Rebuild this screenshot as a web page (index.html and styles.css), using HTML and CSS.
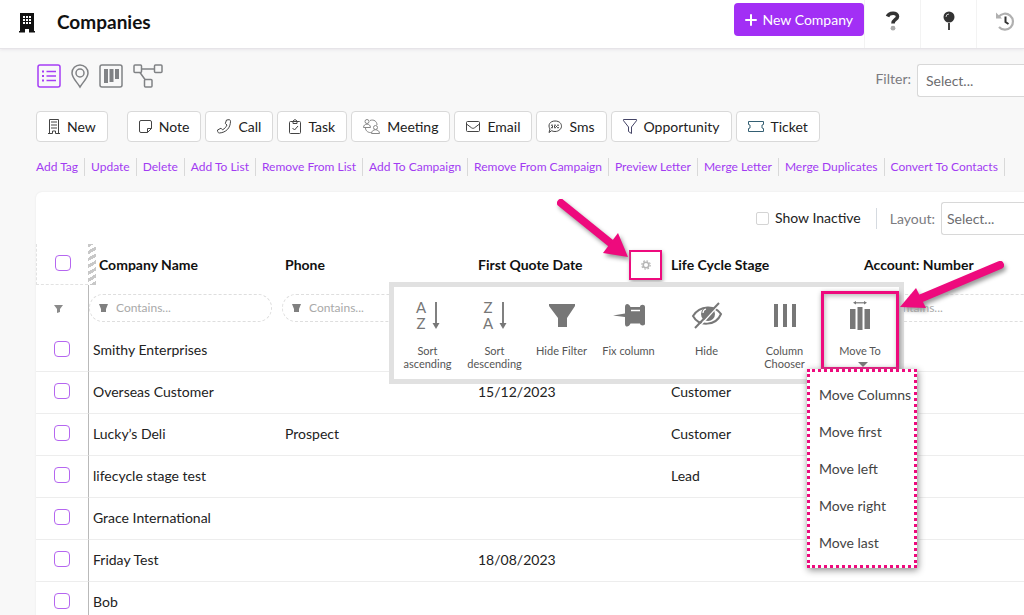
FILE: index.html
```html
<!DOCTYPE html>
<html lang="en">
<head>
<meta charset="utf-8">
<title>Companies</title>
<link rel="stylesheet" href="styles.css">
</head>
<body>
<header class="topbar">
  <svg class="topbar-logo" width="16" height="20" viewBox="0 0 16 20"><path fill="#111" fill-rule="evenodd" d="M1 1h14v18h-5v-3H6v3H1zM4 3v2h2V3zm3 0v2h2V3zm3 0v2h2V3zM4 6v2h2V6zm3 0v2h2V6zm3 0v2h2V6zM4 9v2h2V9zm3 0v2h2V9zm3 0v2h2V9z"/><path fill="#111" d="M1 0h14v1.500H1zM0 18h6v1.500H0zM10 18h6v1.500h-6z"/></svg>
  <h1 class="title">Companies</h1>
  <button class="primary" type="button"><svg width="12" height="12" viewBox="0 0 12 12"><path d="M6 1v10M1 6h10" stroke="#fff" stroke-width="2" stroke-linecap="round"/></svg>New Company</button>
  <nav class="tools">
    <button class="tool" type="button" aria-label="Help"><svg width="16" height="20" viewBox="0 0 16 20"><path d="M2.500 5.500C4 1.500 12.500 1 12.500 5.500c0 3-4.500 3-4.500 7" fill="none" stroke="#333" stroke-width="3.600"/><circle cx="8" cy="17.200" r="2.400" fill="#aaa"/></svg></button>
    <button class="tool" type="button" aria-label="Pin"><svg width="12" height="20" viewBox="0 0 12 20"><circle cx="6" cy="6" r="5.500" fill="#333"/><path d="M3 6a3 3 0 0 1 3-3" fill="none" stroke="#ccc"/><path d="M6 12v7" stroke="#444" stroke-width="2"/></svg></button>
    <button class="tool tool-last" type="button" aria-label="History"><svg width="20" height="20" viewBox="0 0 20 20"><path d="M3.500 6A8 8 0 1 1 4 16" fill="none" stroke="#b0b0b0" stroke-width="2.200"/><path d="M1 1.500v6h6" fill="#b0b0b0"/><path d="M10.500 5.500V11l3 2" fill="none" stroke="#333" stroke-width="2"/></svg></button>
  </nav>
</header>

<main class="page">
  <div class="viewbar">
    <button class="view" type="button" aria-label="List view"><svg width="24" height="24" viewBox="0 0 24 24" fill="none" stroke="#a53df5" stroke-width="1.500"><rect x="1" y="1" width="22" height="22" rx="2"/><path d="M9.500 7.500H19M9.500 12H19M9.500 16.500H19"/><path d="M5 7.500h2M5 12h2M5 16.500h2" stroke-width="2"/></svg></button>
    <button class="view" type="button" aria-label="Map view"><svg width="18" height="24" viewBox="0 0 18 24" fill="none" stroke="#808285" stroke-width="1.500"><path d="M9 23C6 18 1 14 1 9a8 8 0 0 1 16 0c0 5-5 9-8 14z"/><circle cx="9" cy="9" r="4"/></svg></button>
    <button class="view" type="button" aria-label="Board view"><svg width="24" height="24" viewBox="0 0 24 24"><rect x="1" y="1" width="22" height="22" rx="2" fill="none" stroke="#808285" stroke-width="1.500"/><path d="M5 5h4v14H5zM10.500 5h4v13h-4zM16 5h4v10h-4z" fill="#808285"/></svg></button>
    <button class="view" type="button" aria-label="Workflow view"><svg width="30" height="24" viewBox="0 0 30 24" fill="none" stroke="#808285" stroke-width="1.500"><rect x="1" y="1" width="7.500" height="7.500" rx="1"/><rect x="21.500" y="1" width="7.500" height="7.500" rx="1"/><rect x="11.500" y="15.500" width="7.500" height="7.500" rx="1"/><path d="M8.500 5h13M7 8.500l5 7"/></svg></button>
    <label class="select-label" for="filter">Filter:</label>
    <select class="select" id="filter"><option>Select...</option></select>
  </div>

  <div class="actions">
    <button class="action action-new" type="button"><svg width="12" height="15" viewBox="0 0 12 15" fill="none" stroke="#444"><path d="M1.500 14V.5h9V14M0 14.500h4.500V12h3v2.500H12"/><path d="M3.500 3h1M5.500 3h1M7.500 3h1M3.500 6h1M5.500 6h1M7.500 6h1M3.500 9h1M5.500 9h1M7.500 9h1" stroke-width="2"/></svg>New</button>
    <button class="action" type="button"><svg width="13" height="15" viewBox="0 0 13 15" fill="none" stroke="#444"><path d="M8.500 13.500H2a1.500 1.500 0 0 1-1.500-1.500V3A1.500 1.500 0 0 1 2 1.500h9A1.500 1.500 0 0 1 12.500 3v6.500zM8.500 13.500v-4h4"/></svg>Note</button>
    <button class="action" type="button"><svg width="14" height="15" viewBox="0 0 14 15" fill="none" stroke="#444"><path d="M9.500 1l2.500-.3c1 0 1.500.7 1.500 1.500C13.500 9 9 13.500 2.500 14c-1 0-1.500-.5-1.800-1.500L.5 11l3.500-1.800 1.500 1.600C8 9.500 9 8 10 6L8.300 4.500z"/></svg>Call</button>
    <button class="action" type="button"><svg width="12" height="15" viewBox="0 0 12 15" fill="none" stroke="#444"><rect x=".5" y="2.500" width="11" height="12" rx="1"/><path d="M4 4.500V2l2-1.500L8 2v2.500zM3.500 9l2 2 3.500-4"/></svg>Task</button>
    <button class="action" type="button"><svg width="17" height="15" viewBox="0 0 17 15" fill="none" stroke="#888"><circle cx="4" cy="2.500" r="2"/><path d="M.5 8.500C.5 4 7.500 4 7.500 8.500zM7 1.500c4-1.500 7 1 7 4.500M2.500 9c0 3 3 5 6 4.500"/><circle cx="12.500" cy="8.500" r="2"/><path d="M8.500 14.500c0-5 8-5 8 0z"/></svg>Meeting</button>
    <button class="action" type="button"><svg width="14" height="15" viewBox="0 0 14 15" fill="none" stroke="#444"><rect x=".5" y="2.500" width="13" height="10" rx="1"/><path d="M.5 5l5 3.800c1 .7 2 .7 3 0l5-3.800"/></svg>Email</button>
    <button class="action" type="button"><svg width="14" height="15" viewBox="0 0 14 15" fill="none" stroke="#444"><path d="M1 13.500l1-3.500C-.5 6 2 2 7 2s6.500 3 6.500 5.300S11 12.500 7 12.500c-1.500 0-2.500-.3-3.300-.8z"/><path d="M3 6.200h8M3 8.700h8" stroke-dasharray="2 1"/><path d="M4 7.500h6" stroke-dasharray="1 1"/></svg>Sms</button>
    <button class="action" type="button"><svg width="14" height="15" viewBox="0 0 14 15" fill="none" stroke="#446"><path d="M.5.500h13v1.200L8.500 8v6.500l-3-2V8l-5-6.300z"/></svg>Opportunity</button>
    <button class="action" type="button"><svg width="16" height="15" viewBox="0 0 16 15" fill="none" stroke="#345f73"><path d="M.5 2.500h15v3l-1.500.5v3l1.500.5v3H.5v-3L2 9V6l-1.500-.5z"/></svg>Ticket</button>
  </div>

  <nav class="links">
    <a href="#">Add Tag</a><a href="#">Update</a><a href="#">Delete</a><a href="#">Add To List</a><a href="#">Remove From List</a><a href="#">Add To Campaign</a><a href="#">Remove From Campaign</a><a href="#">Preview Letter</a><a href="#">Merge Letter</a><a href="#">Merge Duplicates</a><a href="#">Convert To Contacts</a>
  </nav>

  <section class="card">
    <div class="card-bar">
      <label class="inactive"><input class="inactive-box" type="checkbox">Show Inactive</label>
      <label class="select-label" for="layout">Layout:</label>
      <select class="select select-layout" id="layout"><option>Select...</option></select>
    </div>

    <div class="grid-scroll">
    <table class="grid">
      <colgroup><col class="col-check"><col class="col"><col class="col"><col class="col"><col class="col"><col class="col"></colgroup>
      <thead>
        <tr class="head">
          <th class="check-cell"><input class="check" type="checkbox" aria-label="Select all"></th>
          <th class="name-head">Company Name</th><th>Phone</th>
          <th><div class="head-cell">First Quote Date<button class="gear" type="button" aria-label="Column options"><svg width="10" height="10" viewBox="0 0 10 10" fill="none" stroke="#b5b5b5"><circle cx="5" cy="5" r="2.800" stroke-width="1.600"/><circle cx="5" cy="5" r="4.200" stroke-width="1.200" stroke-dasharray="1.650 1.650"/></svg></button></div></th>
          <th>Life Cycle Stage</th><th>Account: Number</th>
        </tr>
        <tr class="filters">
          <td class="filter-cell"><svg width="9" height="8" viewBox="0 0 9 8"><path d="M0 0h9L6 4v3L3 8V4z" fill="#8a8a8a"/></svg></td>
          <td><label class="pill"><svg width="9" height="8" viewBox="0 0 9 8"><path d="M0 0h9L7 5v3H2V5z" fill="#808080"/></svg><input type="text" placeholder="Contains..." aria-label="Company name filter"></label></td>
          <td><label class="pill"><svg width="9" height="8" viewBox="0 0 9 8"><path d="M0 0h9L7 5v3H2V5z" fill="#808080"/></svg><input type="text" placeholder="Contains..." aria-label="Phone filter"></label></td>
          <td></td><td></td>
          <td><label class="pill"><svg width="9" height="8" viewBox="0 0 9 8"><path d="M0 0h9L7 5v3H2V5z" fill="#808080"/></svg><input type="text" placeholder="Contains..." aria-label="Account filter"></label></td>
        </tr>
      </thead>
      <tbody>
        <tr><td class="check-cell"><input class="check" type="checkbox" aria-label="Select row"></td><td>Smithy Enterprises</td><td></td><td></td><td></td><td></td></tr>
        <tr><td class="check-cell"><input class="check" type="checkbox" aria-label="Select row"></td><td>Overseas Customer</td><td></td><td>15/12/2023</td><td>Customer</td><td></td></tr>
        <tr><td class="check-cell"><input class="check" type="checkbox" aria-label="Select row"></td><td>Lucky’s Deli</td><td>Prospect</td><td></td><td>Customer</td><td></td></tr>
        <tr><td class="check-cell"><input class="check" type="checkbox" aria-label="Select row"></td><td>lifecycle stage test</td><td></td><td></td><td>Lead</td><td></td></tr>
        <tr><td class="check-cell"><input class="check" type="checkbox" aria-label="Select row"></td><td>Grace International</td><td></td><td></td><td></td><td></td></tr>
        <tr><td class="check-cell"><input class="check" type="checkbox" aria-label="Select row"></td><td>Friday Test</td><td></td><td>18/08/2023</td><td></td><td></td></tr>
        <tr><td class="check-cell"><input class="check" type="checkbox" aria-label="Select row"></td><td>Bob</td><td></td><td></td><td></td><td></td></tr>
      </tbody>
    </table>
    </div>

    <div class="popup">
      <button class="option" type="button"><svg width="34" height="28" viewBox="0 0 34 28"><text class="letter" x="10" y="11">A</text><text class="letter" x="10" y="27">Z</text><path d="M25 0v24" stroke="#808080" stroke-width="2"/><path d="M21.500 21h7L25 27z" fill="#777"/></svg>Sort ascending</button>
      <button class="option" type="button"><svg width="34" height="28" viewBox="0 0 34 28"><text class="letter" x="10" y="11">Z</text><text class="letter" x="10" y="27">A</text><path d="M25 0v24" stroke="#808080" stroke-width="2"/><path d="M21.500 21h7L25 27z" fill="#777"/></svg>Sort descending</button>
      <button class="option" type="button"><svg width="34" height="28" viewBox="0 0 34 28"><path d="M4 2h26v2l-8 12v9h-9v-9L4 4z" fill="#777"/></svg>Hide Filter</button>
      <button class="option" type="button"><svg width="34" height="28" viewBox="0 0 34 28"><path d="M1 13.500L13 11.500V5c0-4 4-4 5.500 0H28c0-3 5-3 5 0v17c0 2-5 2-5-.5h-9.500c-1.500 4-5.500 4-5.500.5v-7z" fill="#777"/><path d="M19 8.500h9" stroke="#fff" stroke-width="1.500"/></svg>Fix column</button>
      <span class="rule"></span>
      <button class="option" type="button"><svg width="34" height="28" viewBox="0 0 34 28" fill="none" stroke="#777" stroke-width="2"><path d="M3 14C10 3 25 3 31 12c-5 12-22 13-28 2z"/><circle cx="18" cy="12" r="7" fill="#777" stroke="none"/><path d="M13 11c0-2 1-3.500 3-4" stroke="#fff" stroke-width="1.200"/><path d="M8 26L28 4" stroke="#fff" stroke-width="1.500"/><path d="M5 26L29 1"/></svg>Hide</button>
      <span class="rule"></span>
      <button class="option" type="button"><svg width="34" height="28" viewBox="0 0 34 28"><path d="M6 2h4v23H6zM15 2h4v23h-4zM24 2h4v23h-4z" fill="#777"/></svg>Column Chooser</button>
      <button class="option option-move" type="button"><svg width="34" height="28" viewBox="0 0 34 28"><path d="M7 7h5.500v20H7zM14.500 5h5v23h-5zM21.500 7H27v20h-5.500z" fill="#777"/><path d="M12 .8h10" stroke="#777" stroke-width="1.200"/><path d="M13-1v3.600L10 .8zM21-1v3.600l3-1.800z" fill="#777"/></svg>Move To<svg class="caret" width="10" height="5" viewBox="0 0 10 5"><path d="M0 0h10L5 5z" fill="#777"/></svg></button>
    </div>
    <div class="menu">
      <button type="button">Move Columns</button><button type="button">Move first</button><button type="button">Move left</button><button type="button">Move right</button><button type="button">Move last</button>
    </div>
    <svg class="arrow arrow-gear" width="80" height="70" viewBox="0 0 80 70"><path d="M6 6L58 48" stroke="#ee0a7d" stroke-width="8" stroke-linecap="round"/><path d="M63 36L73 60 48 56z" fill="#ee0a7d"/></svg>
    <svg class="arrow arrow-move" width="110" height="60" viewBox="0 0 110 60"><path d="M105 9L22 44" stroke="#ee0a7d" stroke-width="8" stroke-linecap="round"/><path d="M5 51L21 32 31 52z" fill="#ee0a7d"/></svg>
  </section>
</main>
</body>
</html>
```
FILE: styles.css
```css
* { box-sizing: border-box; }

body {
  margin: 0;
  height: 100vh;
  overflow: hidden;
  background: #f8f8f8;
  color: #222;
  font: 14px/20px Lato, "Open Sans", sans-serif;
}

button, input, select { font: inherit; color: inherit; }
button { margin: 0; padding: 0; border: 0; background: none; }
svg { flex: none; overflow: visible; }

.topbar {
  display: flex;
  align-items: flex-start;
  height: 49px;
  padding-left: 19px;
  background: #fff;
  border-bottom: 1px solid #e6e4e8;
  box-shadow: 0 1px 3px #e8e6ea;
}
.topbar-logo { margin-top: 13px; }
.title {
  flex: 1;
  margin: 10px 0 0 22px;
  font-size: 19px;
  line-height: 24px;
  font-weight: 700;
  color: #111;
}
.primary {
  display: flex;
  align-items: center;
  gap: 6px;
  height: 33px;
  margin-top: 3px;
  padding: 0 11px;
  border-radius: 4px;
  background: #a22ff5;
  color: #fff;
}
.tools { display: flex; height: 48px; }
.tool {
  display: flex;
  justify-content: center;
  width: 56px;
  padding-top: 11px;
  border-left: 1px solid #f3f3f3;
}
.tool-last { justify-content: flex-start; width: 48px; padding-left: 18px; }

.page { padding: 15px 0 0 36px; }

.viewbar { display: flex; align-items: flex-start; gap: 10px; height: 33px; padding-left: 1px; }
.view { display: flex; }
.select-label { margin-left: auto; line-height: 30px; color: #7b7b80; }
.select {
  width: 107px;
  height: 33px;
  margin-left: -4px;
  padding: 1px 8px 0;
  appearance: none;
  border: 1px solid #d8d8d8;
  border-right: 0;
  border-radius: 3px 0 0 3px;
  background: #fff;
  color: #6c6c70;
}

.actions { display: flex; gap: 4px; margin-top: 14px; }
.action {
  display: flex;
  align-items: center;
  gap: 7px;
  height: 31px;
  padding: 0 11px;
  border: 1px solid #d9d9d9;
  border-radius: 4px;
  background: #fff;
}
.action-new { margin-right: 15px; }

.links { display: flex; margin-top: 16px; }
.links a {
  margin-right: 6px;
  padding-right: 6px;
  border-right: 1px solid #d9d9d9;
  font-size: 12px;
  line-height: 18px;
  color: #a23bf2;
  text-decoration: none;
  white-space: nowrap;
}

.card {
  position: relative;
  margin-top: 16px;
  background: #fff;
  border-top-left-radius: 6px;
  box-shadow: 0 0 2px #e4e4e4;
}
.card-bar {
  display: flex;
  align-items: center;
  justify-content: flex-end;
  height: 52px;
}
.card-bar .select-label {
  margin: 0;
  padding-left: 13px;
  border-left: 1px solid #d5dae0;
  line-height: 21px;
}
.select-layout { width: 83px; margin-left: 6px; padding: 2px 5px 0; }
.inactive { display: flex; align-items: center; gap: 6px; margin-right: 15px; }
.inactive-box {
  width: 13px;
  height: 13px;
  margin: 0;
  appearance: none;
  border: 1px solid #d4d4d4;
  border-radius: 2px;
}

.grid-scroll { overflow: hidden; }
.grid {
  width: 1017px;
  table-layout: fixed;
  border-collapse: separate;
  border-spacing: 0;
}
.col-check { width: 52px; }
.col { width: 193px; }
.grid th, .grid td { padding: 0 0 0 4px; text-align: left; }
.grid th { height: 41px; font-weight: 700; color: #111; }
.grid .check-cell, .grid .filter-cell { padding: 0; text-align: center; }
.grid th.check-cell { border: 1px dashed #e2e2e2; border-width: 0 0 1px 1px; }
.grid th.name-head {
  padding-left: 11px;
  background: repeating-linear-gradient(150deg, #c8c8c8 0 3px, #fff 3px 6px) left / 8px 100% no-repeat;
}
.check {
  display: block;
  width: 16px;
  height: 16px;
  margin: 0 auto 3px;
  appearance: none;
  border: 1px solid #b566f0;
  border-radius: 4px;
  background: #fff;
}
.head-cell { display: flex; align-items: center; justify-content: space-between; }
.gear {
  display: flex;
  align-items: center;
  justify-content: center;
  width: 33px;
  height: 30px;
  margin-right: 5px;
  border: 2px solid #ee0a7d;
  box-shadow: 1px 2px 4px #aaa;
}
.grid .filters td { height: 45px; padding: 0 9px 0 1px; }
.pill {
  display: flex;
  align-items: center;
  gap: 8px;
  height: 28px;
  padding-left: 9px;
  border: 1px dashed #dedede;
  border-radius: 14px;
}
.pill input {
  flex: 1;
  min-width: 0;
  padding: 0;
  border: 0;
  outline: 0;
  background: none;
  font-size: 12px;
}
.pill input::placeholder { color: #a9a9a9; }
.grid tbody td { height: 42px; padding-bottom: 1px; border-bottom: 1px solid #ededed; }
.grid .filters td:nth-child(2), .grid tbody td:nth-child(2) { border-left: 1px solid #b9b9b9; }
.grid .filters td:nth-child(2) { padding-left: 0; }

.popup {
  position: absolute;
  top: 90px;
  left: 353px;
  display: flex;
  width: 515px;
  height: 102px;
  border: 5px solid #e1e1e1;
  background: #fff;
}
.option {
  display: flex;
  flex-direction: column;
  align-items: center;
  width: 67px;
  flex: none;
  padding: 15px 4px 0;
  font-size: 11px;
  line-height: 13px;
  color: #555;
}
.option svg { margin-bottom: 14px; }
.letter { font-size: 15px; fill: #777; text-anchor: middle; }
.rule { width: 1px; height: 72px; margin: 10px 5px 0 6px; background: #dedede; }
.option-move {
  width: 78px;
  height: 79px;
  margin: 4px 0 0 3px;
  padding-top: 8px;
  border: 3px solid #ee0a7d;
  box-shadow: 1px 2px 5px #888, inset 1px 2px 5px #bbb;
}
.option-move .caret { margin: 5px 0 0 6px; }
.menu {
  position: absolute;
  top: 177px;
  left: 771px;
  display: flex;
  flex-direction: column;
  padding: 4px 3px 4px 9px;
  border: 3px dotted #ee0a7d;
  background: #fff;
  box-shadow: 1px 2px 7px #888;
}
.menu button { height: 37px; text-align: left; color: #444; }

.arrow { position: absolute; fill: none; filter: drop-shadow(2px 3px 2px #999); }
.arrow-gear { left: 519px; top: 5px; }
.arrow-move { left: 859px; top: 64px; }
```
